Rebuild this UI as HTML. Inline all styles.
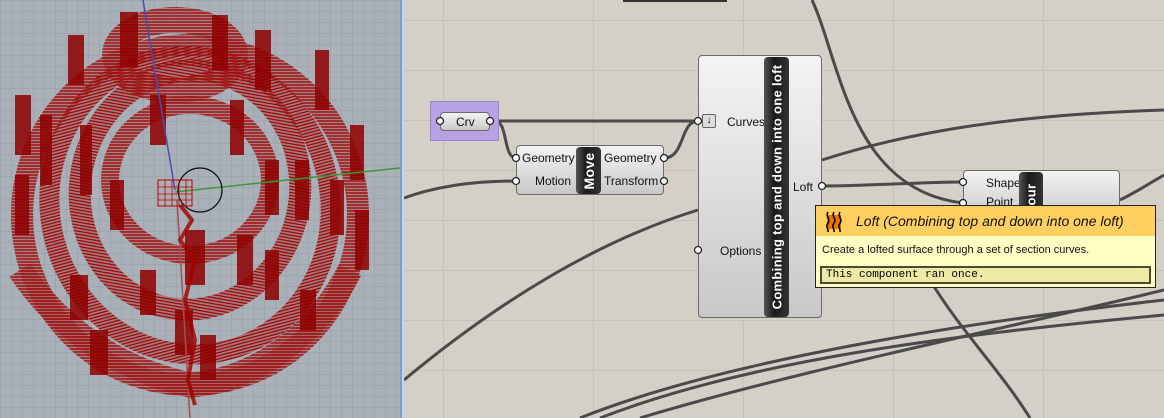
<!DOCTYPE html>
<html><head><meta charset="utf-8"><style>
html,body{margin:0;padding:0;width:1164px;height:418px;overflow:hidden;background:#d4d0c8;font-family:"Liberation Sans",sans-serif}
.abs{position:absolute}
.comp{position:absolute;background:linear-gradient(#f4f4f4,#c8c8c8);border:1px solid #6a6a6a;border-radius:4px;box-sizing:border-box}
.bar{position:absolute;background:linear-gradient(90deg,#555,#1a1a1a 40%,#333);border-radius:4px;color:#fff;font-weight:bold;box-sizing:border-box;overflow:hidden}
.lbl{position:absolute;font-size:12px;color:#111;white-space:nowrap}
.rot{position:absolute;left:50%;top:50%;transform:translate(-50%,-50%) rotate(-90deg);white-space:nowrap;letter-spacing:.3px}
</style></head><body>
<svg class="abs" style="left:0;top:0" width="1164" height="418">
<defs>
<pattern id="g" width="150" height="50" patternUnits="userSpaceOnUse" x="443" y="20">
<path d="M0 0V50M0 0H150" stroke="#bdb9b1" stroke-width="1.2" fill="none"/></pattern>
<pattern id="vg" width="11" height="11" patternUnits="userSpaceOnUse">
<path d="M0 0V11M0 0H11" stroke="#959da5" stroke-width="1" fill="none"/></pattern>
<pattern id="hatch" width="4" height="3" patternUnits="userSpaceOnUse">
<rect width="4" height="3" fill="#a04848" opacity=".45"/><path d="M0 1H4" stroke="#a00000" stroke-width="1.3"/></pattern>
</defs>
<rect x="404" y="0" width="760" height="418" fill="url(#g)"/>
<g stroke="#4a4a4a" stroke-width="3" fill="none">
<path d="M404 198 C440 185,480 181,516 181"/>
<path d="M404 380 C500 300,600 240,698 210"/>
<path d="M812 0 C840 60,850 190,963 203"/>
<path d="M822 160 C900 135,1000 115,1164 110"/>
<path d="M930 280 C960 330,1000 370,1030 418"/>
<path d="M580 418 C700 370,900 330,1164 300"/>
<path d="M600 418 C750 360,950 335,1164 315"/>
<path d="M640 418 C800 370,1000 330,1164 290"/>
<path d="M1120 200 C1140 190,1155 180,1164 175"/>
<path d="M822 186 C870 186,920 182,963 182"/>
<path d="M495 121 H698"/>
<path d="M495 121 C508 121,503 158,516 158"/>
<path d="M664 158 C685 158,680 121,698 121"/>
</g>
<rect x="623" y="0" width="104" height="2" fill="#333"/>
<rect x="0" y="0" width="400" height="418" fill="#a9b0b8"/>
<rect x="0" y="0" width="400" height="418" fill="url(#vg)"/>
<rect x="400" y="0" width="4" height="418" fill="#7f9fc8"/>
<rect x="402" y="0" width="2" height="418" fill="#c8d6e8"/>
<g fill="none">
<ellipse cx="190" cy="215" rx="168" ry="170" stroke="url(#hatch)" stroke-width="22"/>
<ellipse cx="190" cy="205" rx="140" ry="150" stroke="url(#hatch)" stroke-width="20" transform="rotate(-15 190 205)"/>
<ellipse cx="190" cy="190" rx="110" ry="120" stroke="url(#hatch)" stroke-width="22" transform="rotate(10 190 190)"/>
<ellipse cx="190" cy="180" rx="80" ry="75" stroke="url(#hatch)" stroke-width="18"/>
<ellipse cx="175" cy="55" rx="60" ry="35" stroke="url(#hatch)" stroke-width="26"/>
<path d="M20 270 C60 330,120 370,190 385 C260 380,320 330,350 270" stroke="url(#hatch)" stroke-width="25"/>
</g>
<g fill="#8f0000" opacity=".85">
<rect x="120" y="12" width="18" height="55"/><rect x="212" y="15" width="16" height="55"/>
<rect x="68" y="35" width="16" height="50"/><rect x="255" y="30" width="16" height="60"/>
<rect x="315" y="50" width="14" height="60"/><rect x="15" y="95" width="16" height="60"/>
<rect x="150" y="95" width="16" height="50"/><rect x="230" y="100" width="14" height="55"/>
<rect x="350" y="125" width="14" height="55"/><rect x="295" y="160" width="14" height="60"/>
<rect x="265" y="160" width="14" height="55"/><rect x="15" y="175" width="14" height="60"/>
<rect x="110" y="180" width="14" height="50"/><rect x="330" y="180" width="14" height="55"/>
<rect x="355" y="210" width="14" height="60"/><rect x="185" y="230" width="20" height="55"/>
<rect x="237" y="235" width="16" height="50"/><rect x="265" y="250" width="14" height="50"/>
<rect x="70" y="275" width="18" height="45"/><rect x="140" y="270" width="16" height="45"/>
<rect x="300" y="290" width="16" height="40"/><rect x="90" y="330" width="18" height="45"/>
<rect x="175" y="310" width="18" height="45"/><rect x="200" y="335" width="16" height="45"/>
<rect x="40" y="115" width="12" height="70"/><rect x="80" y="125" width="12" height="70"/>
</g>
<path d="M143 0 L175 190" stroke="#4a4cb0" stroke-width="1.5"/>
<path d="M175 192 L400 168" stroke="#3a9a3a" stroke-width="1.5"/>
<path d="M177 200 L190 418" stroke="#a05050" stroke-width="1.5"/>
<circle cx="200" cy="190" r="22" fill="none" stroke="#111" stroke-width="1.2"/>
<rect x="158" y="180" width="34" height="26" fill="none" stroke="#c00000" stroke-width="1"/>
<path d="M158 187H192M158 194H192M158 200H192M165 180V206M172 180V206M179 180V206M186 180V206" stroke="#c00000" stroke-width=".8"/>
<path d="M180 205 L192 220 L180 240 L195 260 L185 300 L195 340 L188 380 L195 405" stroke="#a00000" stroke-width="4" fill="none" opacity=".8"/>
</svg>

<div class="abs" style="left:430px;top:101px;width:69px;height:40px;background:#b8a2e4;border:1px solid #9a86c8;box-sizing:border-box"></div>
<div class="comp" style="left:440px;top:112px;width:50px;height:19px;border-radius:4px"><div class="lbl" style="left:15px;top:2px">Crv</div></div>
<div class="comp" style="left:516px;top:145px;width:148px;height:50px">
<div class="lbl" style="left:5px;top:5px">Geometry</div><div class="lbl" style="left:18px;top:28px">Motion</div>
<div class="lbl" style="left:87px;top:5px">Geometry</div><div class="lbl" style="left:87px;top:28px">Transform</div>
<div class="bar" style="left:59px;top:1px;width:25px;height:47px;font-size:14px"><div class="rot">Move</div></div>
</div>
<div class="comp" style="left:698px;top:55px;width:124px;height:263px">
<div class="abs" style="left:3px;top:58px;width:12px;height:12px;border:1px solid #666;border-radius:2px;font-size:10px;line-height:12px;text-align:center;background:#ddd">↓</div>
<div class="lbl" style="left:28px;top:59px">Curves</div>
<div class="lbl" style="left:21px;top:188px">Options</div>
<div class="lbl" style="left:94px;top:124px">Loft</div>
<div class="bar" style="left:65px;top:1px;width:25px;height:260px;font-size:13px"><div class="rot">Combining top and down into one loft</div></div>
</div>
<div class="comp" style="left:963px;top:170px;width:157px;height:50px">
<div class="lbl" style="left:22px;top:5px">Shape</div><div class="lbl" style="left:22px;top:24px">Point</div>
<div class="bar" style="left:55px;top:1px;width:24px;height:47px;font-size:13px"><div class="rot" style="top:80%">Contour</div></div>
</div>
<svg class="abs" style="left:0;top:0" width="1164" height="418">
<g fill="#fff" stroke="#222" stroke-width="1.3">
<circle cx="440" cy="121" r="3.5"/><circle cx="490" cy="121" r="3.5"/>
<circle cx="516" cy="158" r="3.5"/><circle cx="516" cy="181" r="3.5"/>
<circle cx="664" cy="158" r="3.5"/><circle cx="664" cy="181" r="3.5"/>
<circle cx="698" cy="121" r="3.5"/><circle cx="698" cy="250" r="3.5"/><circle cx="822" cy="186" r="3.5"/>
<circle cx="963" cy="182" r="3.5"/><circle cx="963" cy="203" r="3.5"/>
</g></svg>
<div class="abs" style="left:815px;top:205px;width:341px;height:83px;border:1px solid #222;background:#ffffc4;box-sizing:border-box">
<div style="height:30px;background:#ffd060;position:relative">
<svg class="abs" style="left:8px;top:5px" width="20" height="22"><rect x="3" y="4" width="14" height="14" fill="#f07000"/><g stroke="#000" stroke-width="1.6" fill="none"><path d="M4 1 C1 5,7 8,4 12 C1 16,5 18,4 21"/><path d="M10 1 C7 5,13 8,10 12 C7 16,11 18,10 21"/><path d="M16 1 C13 5,19 8,16 12 C13 16,17 18,16 21"/></g></svg>
<div class="abs" style="left:40px;top:7px;font-size:14px;font-style:italic;color:#111">Loft (Combining top and down into one loft)</div>
</div>
<div class="abs" style="left:6px;top:38px;font-size:11px;color:#111">Create a lofted surface through a set of section curves.</div>
<div class="abs" style="left:4px;top:60px;width:331px;height:18px;background:#eeeaa6;border:2px solid #4a4a30;box-sizing:border-box;font-family:'Liberation Mono',monospace;font-size:11px;padding-left:4px;line-height:14px">This component ran once.</div>
</div>
</body></html>
